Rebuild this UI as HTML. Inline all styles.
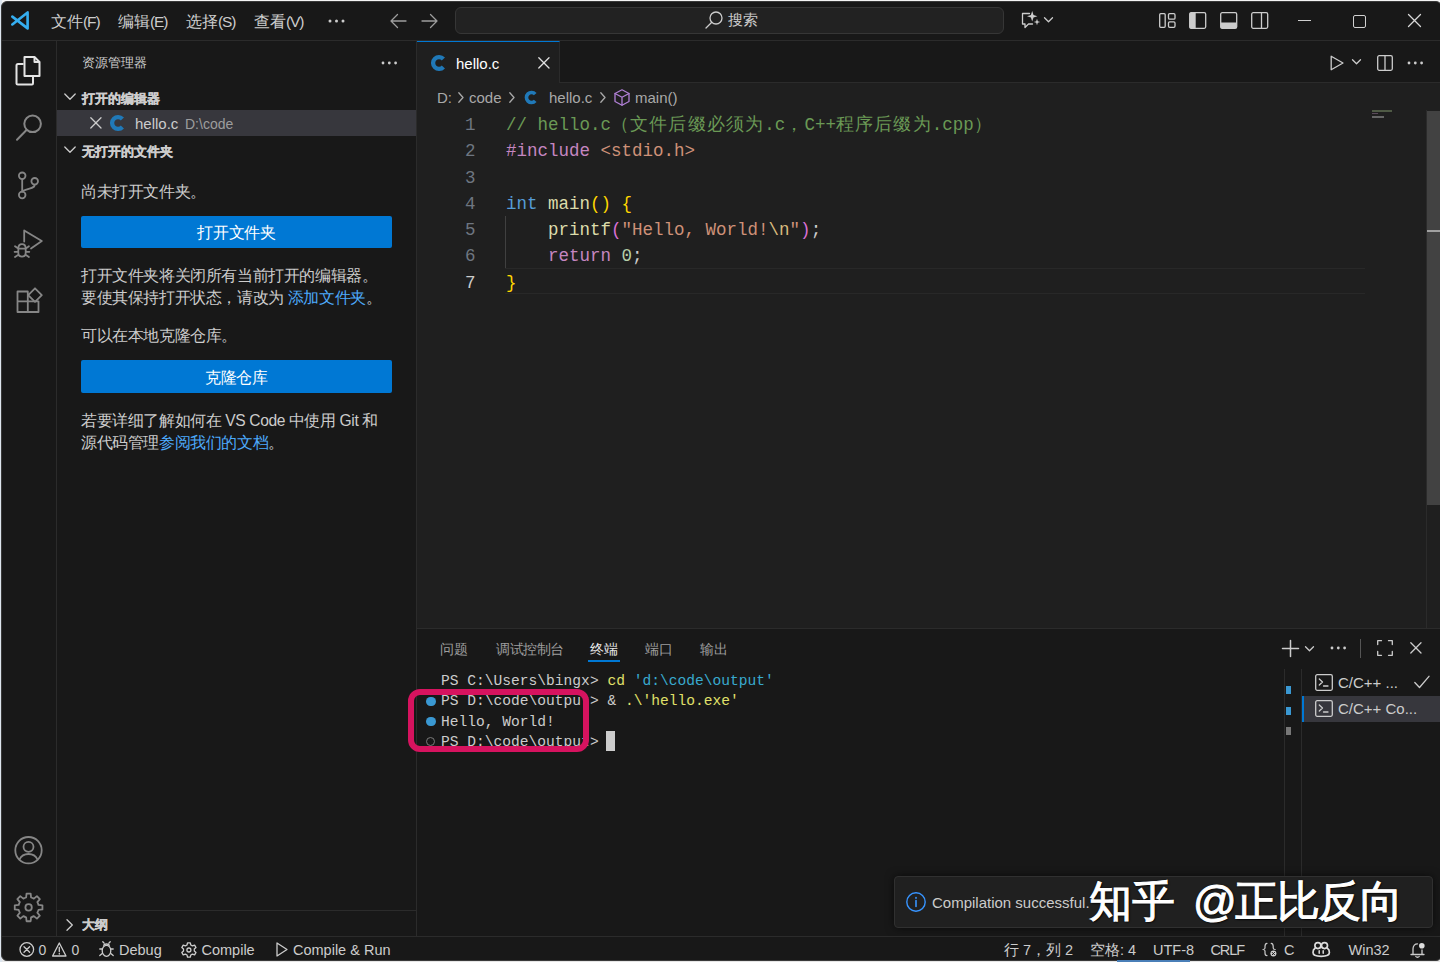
<!DOCTYPE html>
<html><head><meta charset="utf-8">
<style>
*{box-sizing:border-box;margin:0;padding:0}
html,body{width:1440px;height:962px;overflow:hidden;background:#e6e6e6}
body{font-family:"Liberation Sans",sans-serif;color:#cccccc;position:relative}
.a{position:absolute}
.t{position:absolute;white-space:pre;line-height:1}
svg{position:absolute;overflow:visible}
.mono{font-family:"Liberation Mono",monospace}
.cj{letter-spacing:1.15px}
.ic{fill:none;stroke:#868686;stroke-width:1.6;stroke-linecap:round;stroke-linejoin:round}
.ti{fill:none;stroke:#cccccc;stroke-width:1.3;stroke-linecap:round;stroke-linejoin:round}
</style></head><body>
<!-- window frame -->
<div class="a" style="left:0;top:0;width:1440px;height:2px;background:#f4f4f4"></div>
<div class="a" style="left:0;top:0;width:2px;height:962px;background:#dde5ee"></div>
<div class="a" style="left:1px;top:1px;width:1441px;height:960px;background:#181818;border-radius:6px;border:1px solid #3a3a3a"></div>

<!-- ================= TITLE BAR ================= -->
<div class="a" style="left:2px;top:40px;width:1438px;height:1px;background:#2b2b2b"></div>
<svg style="left:0;top:0" width="1" height="1"><g fill="none" stroke="#35aef0" stroke-width="2.6" stroke-linecap="round" stroke-linejoin="round"><path d="M12.3 16.6L27.6 28.4V12.4L12.3 24.4"/></g></svg>
<div class="t" style="left:51px;top:14px;font-size:15.5px;color:#cccccc">文件<span style="letter-spacing:-1.1px">(F</span>)</div>
<div class="t" style="left:118px;top:14px;font-size:15.5px;color:#cccccc">编辑<span style="letter-spacing:-1.1px">(E</span>)</div>
<div class="t" style="left:186px;top:14px;font-size:15.5px;color:#cccccc">选择<span style="letter-spacing:-1.1px">(S</span>)</div>
<div class="t" style="left:254px;top:14px;font-size:15.5px;color:#cccccc">查看<span style="letter-spacing:-1.1px">(V</span>)</div>
<svg style="left:328px;top:19px" width="18" height="4"><circle cx="2" cy="2" r="1.5" fill="#ccc"/><circle cx="8.5" cy="2" r="1.5" fill="#ccc"/><circle cx="15" cy="2" r="1.5" fill="#ccc"/></svg>
<!-- nav arrows -->
<svg style="left:390px;top:13px" width="17" height="16" class="ti"><path style="stroke:#9d9d9d" d="M1 8H16M1 8L7.5 1.5M1 8L7.5 14.5"/></svg>
<svg style="left:421px;top:13px" width="17" height="16" class="ti"><path style="stroke:#9d9d9d" d="M16 8H1M16 8L9.5 1.5M16 8L9.5 14.5"/></svg>
<!-- search box -->
<div class="a" style="left:455px;top:7px;width:549px;height:27px;background:#222222;border:1px solid #363636;border-radius:6px"></div>
<svg style="left:705px;top:11px" width="18" height="18" class="ti"><circle cx="11" cy="7" r="6"/><path d="M6.8 11.2L1 17"/></svg>
<div class="t" style="left:728px;top:13px;font-size:14.5px;color:#cccccc">搜索</div>
<!-- copilot -->
<svg style="left:1020px;top:11px" width="20" height="18" class="ti"><path d="M9.5 2.5H2.5V13H5V16.5L8.5 13H12.5"/><path fill="#ccc" stroke="none" d="M12.2 0L13.5 3.9 17.4 5.2 13.5 6.5 12.2 10.4 10.9 6.5 7 5.2 10.9 3.9Z"/><path fill="#ccc" stroke="none" d="M17 7.8L17.8 10.2 20.2 11 17.8 11.8 17 14.2 16.2 11.8 13.8 11 16.2 10.2Z"/></svg>
<svg style="left:1044px;top:17px" width="9" height="6" class="ti"><path d="M0.5 0.8L4.5 4.8 8.5 0.8"/></svg>
<!-- layout icons -->
<svg style="left:1159px;top:13px" width="17" height="15" class="ti"><rect x="0.7" y="0.7" width="5.5" height="13.6" rx="1"/><rect x="9.5" y="0.7" width="6.5" height="5.5" rx="1.2"/><rect x="9.5" y="8.8" width="6.5" height="5.5" rx="1.2"/></svg>
<svg style="left:1189px;top:12px" width="18" height="17" class="ti"><rect x="0.7" y="0.7" width="16" height="15.6" rx="1.5"/><rect x="0.7" y="0.7" width="6" height="15.6" fill="#ccc" stroke="none"/></svg>
<svg style="left:1220px;top:12px" width="18" height="17" class="ti"><rect x="0.7" y="0.7" width="16" height="15.6" rx="1.5"/><rect x="0.7" y="10.5" width="16" height="5.8" fill="#ccc" stroke="none"/></svg>
<svg style="left:1251px;top:12px" width="18" height="17" class="ti"><rect x="0.7" y="0.7" width="16" height="15.6" rx="1.5"/><path d="M10.5 0.7V16.3"/></svg>
<!-- window controls -->
<div class="a" style="left:1298px;top:20px;width:13px;height:1.3px;background:#d0d0d0"></div>
<div class="a" style="left:1353px;top:15px;width:12.5px;height:12.5px;border:1.3px solid #d0d0d0;border-radius:2px"></div>
<svg style="left:1408px;top:14px" width="13" height="13" class="ti"><path style="stroke:#d8d8d8" d="M0.5 0.5L12.5 12.5M12.5 0.5L0.5 12.5"/></svg>

<!-- ================= ACTIVITY BAR ================= -->
<div class="a" style="left:56px;top:41px;width:1px;height:895px;background:#2b2b2b"></div>

<svg style="left:15px;top:56px" width="27" height="30"><g fill="none" stroke="#e4e4e4" stroke-width="2" stroke-linejoin="round"><path d="M24.5 1H34.5L39.5 6V20H24.5Z" transform="translate(-15 0)"/><path d="M34.5 1V6H39.5" transform="translate(-15 0)"/><path d="M23.5 8H18C17 8 16.5 8.5 16.5 9.5V27.5C16.5 28.3 17 28.5 17.8 28.5H32C32.8 28.5 33 28 33 27.3V21" transform="translate(-15 0)"/></g></svg>
<svg style="left:15px;top:113px" width="28" height="30" class="ic"><circle cx="17.6" cy="10.8" r="8.3" stroke-width="2"/><path d="M11.5 17L2 26.8" stroke-width="2"/></svg>
<svg style="left:15px;top:170px" width="28" height="32" class="ic"><g stroke-width="1.8"><circle cx="7.2" cy="5.8" r="3.3"/><circle cx="19.7" cy="11.3" r="3.3"/><circle cx="7.2" cy="25" r="3.3"/><path d="M7.2 9.1V21.7"/><path d="M19.7 14.6C19.7 19 14 17.5 7.5 21"/></g></svg>
<svg style="left:0px;top:0px" width="1" height="1" class="ic"><g stroke-width="1.8"><path d="M24.2 241.5V230.5L41.8 241.1 31 248.6"/><path d="M18.3 248.6C18.3 242.6 25.7 242.6 25.7 248.6ZM18.3 248.6V252.5C18.3 258 25.7 258 25.7 252.5V248.6M15 246.3L18.2 248.6M28.9 246.3L25.8 248.6M14.6 251.8H18.2M29.3 251.8H25.8M15 257L18.4 254.8M28.9 257L25.6 254.8"/></g></svg>
<svg style="left:15px;top:287px" width="30" height="30" class="ic"><g stroke-width="1.8"><path d="M2.5 4.5H12.8V14.3H2.5ZM2.5 14.3H12.8V25H2.5ZM12.8 14.3H23.5V25H12.8Z"/><path d="M20 1.3L26.8 8.1 20 14.9 13.2 8.1Z"/></g></svg>
<svg style="left:14px;top:836px" width="30" height="30" class="ic"><g stroke-width="1.8"><circle cx="14.5" cy="14.2" r="13.2"/><circle cx="14.5" cy="10.8" r="5"/><path d="M5.5 23.5C7.5 19 11 18 14.5 18S21.5 19 23.5 23.5"/></g></svg>
<svg style="left:0;top:0" width="1" height="1" class="ic"><g stroke-width="1.8"><path d="M26.13 897.50L26.53 893.55L30.67 893.55L31.07 897.50A10.2 10.2 0 0 1 33.85 898.66L36.93 896.15L39.85 899.07L37.34 902.15A10.2 10.2 0 0 1 38.50 904.93L42.45 905.33L42.45 909.47L38.50 909.87A10.2 10.2 0 0 1 37.34 912.65L39.85 915.73L36.93 918.65L33.85 916.14A10.2 10.2 0 0 1 31.07 917.30L30.67 921.25L26.53 921.25L26.13 917.30A10.2 10.2 0 0 1 23.35 916.14L20.27 918.65L17.35 915.73L19.86 912.65A10.2 10.2 0 0 1 18.70 909.87L14.75 909.47L14.75 905.33L18.70 904.93A10.2 10.2 0 0 1 19.86 902.15L17.35 899.07L20.27 896.15L23.35 898.66A10.2 10.2 0 0 1 26.13 897.50Z"/><circle cx="28.6" cy="907.4" r="3.2"/></g></svg>
<!-- ================= SIDEBAR ================= -->
<div class="a" style="left:416px;top:41px;width:1px;height:895px;background:#2b2b2b"></div>
<div class="t" style="left:82px;top:56px;font-size:13px;color:#cccccc">资源管理器</div>
<svg style="left:381px;top:61px" width="17" height="4"><circle cx="2" cy="2" r="1.4" fill="#ccc"/><circle cx="8.3" cy="2" r="1.4" fill="#ccc"/><circle cx="14.6" cy="2" r="1.4" fill="#ccc"/></svg>
<!-- open editors -->
<svg style="left:64px;top:93px" width="12" height="8" class="ti"><path d="M0.8 1L6 6.3 11.2 1"/></svg>
<div class="t" style="left:82px;top:92px;font-size:13px;font-weight:bold;-webkit-text-stroke:0.3px #ccc;color:#cccccc">打开的编辑器</div>
<div class="a" style="left:57px;top:110px;width:359px;height:26px;background:#37373d"></div>
<svg style="left:90px;top:117px" width="12" height="12" class="ti"><path d="M0.8 0.8L11 11M11 0.8L0.8 11"/></svg>
<svg style="left:107.8px;top:112.9px" width="20.0" height="20.0"><path d="M14.38 6.05A5.90 5.90 0 1 0 14.38 13.95" fill="none" stroke="#2079b8" stroke-width="4.30"/></svg>
<div class="t" style="left:135px;top:116px;font-size:15px;color:#cccccc">hello.c</div>
<div class="t" style="left:185px;top:117px;font-size:14px;color:#9d9d9d">D:\code</div>
<!-- no folder -->
<svg style="left:64px;top:146px" width="12" height="8" class="ti"><path d="M0.8 1L6 6.3 11.2 1"/></svg>
<div class="t" style="left:82px;top:145px;font-size:13px;font-weight:bold;-webkit-text-stroke:0.3px #ccc;color:#cccccc">无打开的文件夹</div>
<div class="t" style="left:81px;top:184px;font-size:15.6px;letter-spacing:-0.4px;color:#cccccc">尚未打开文件夹。</div>
<div class="a" style="left:81px;top:216px;width:311px;height:32px;background:#0078d4;border-radius:2px"></div>
<div class="t" style="left:81px;top:225px;width:311px;text-align:center;font-size:15.6px;letter-spacing:-0.4px;color:#ffffff">打开文件夹</div>
<div class="t" style="left:81px;top:268px;font-size:15.6px;letter-spacing:-0.4px;color:#cccccc">打开文件夹将关闭所有当前打开的编辑器。</div>
<div class="t" style="left:81px;top:290px;font-size:15.6px;letter-spacing:-0.4px;color:#cccccc">要使其保持打开状态，请改为 <span style="color:#4daafc">添加文件夹</span>。</div>
<div class="t" style="left:81px;top:328px;font-size:15.6px;letter-spacing:-0.4px;color:#cccccc">可以在本地克隆仓库。</div>
<div class="a" style="left:81px;top:360px;width:311px;height:33px;background:#0078d4;border-radius:2px"></div>
<div class="t" style="left:81px;top:370px;width:311px;text-align:center;font-size:15.6px;letter-spacing:-0.4px;color:#ffffff">克隆仓库</div>
<div class="t" style="left:81px;top:413px;font-size:15.6px;letter-spacing:-0.4px;color:#cccccc">若要详细了解如何在 VS Code 中使用 Git 和</div>
<div class="t" style="left:81px;top:435px;font-size:15.6px;letter-spacing:-0.4px;color:#cccccc">源代码管理<span style="color:#4daafc">参阅我们的文档</span>。</div>
<!-- outline -->
<div class="a" style="left:57px;top:910px;width:359px;height:1px;background:#2b2b2b"></div>
<svg style="left:66px;top:919px" width="8" height="12" class="ti"><path d="M1 0.8L6.3 6 1 11.2"/></svg>
<div class="t" style="left:82px;top:918px;font-size:13px;font-weight:bold;-webkit-text-stroke:0.3px #ccc;color:#cccccc">大纲</div>
<!-- ================= EDITOR ================= -->
<div class="a" style="left:417px;top:41px;width:1023px;height:587px;background:#1f1f1f"></div>
<div class="a" style="left:417px;top:41px;width:1023px;height:42px;background:#181818;border-bottom:1px solid #2b2b2b"></div>
<div class="a" style="left:417px;top:41px;width:143px;height:42px;background:#1f1f1f;border-top:1.5px solid #0078d4;border-right:1px solid #2b2b2b"></div>
<svg style="left:428.8px;top:53.3px" width="20.0" height="20.0"><path d="M14.38 6.05A5.90 5.90 0 1 0 14.38 13.95" fill="none" stroke="#2079b8" stroke-width="4.30"/></svg>
<div class="t" style="left:456px;top:56px;font-size:15px;color:#ffffff">hello.c</div>
<svg style="left:538px;top:57px" width="12" height="12" class="ti"><path style="stroke:#e0e0e0" d="M0.8 0.8L11 11M11 0.8L0.8 11"/></svg>
<!-- editor actions -->
<svg style="left:1330px;top:55px" width="14" height="16" class="ti"><path d="M1.2 1.2L13 8 1.2 14.8Z"/></svg>
<svg style="left:1352px;top:59px" width="9" height="6" class="ti"><path d="M0.5 0.8L4.5 4.8 8.5 0.8"/></svg>
<svg style="left:1377px;top:55px" width="16" height="16" class="ti"><rect x="0.7" y="0.7" width="14.6" height="14.6" rx="1.5"/><path d="M8 0.7V15.3"/></svg>
<svg style="left:1407px;top:61px" width="17" height="4"><circle cx="2" cy="2" r="1.4" fill="#ccc"/><circle cx="8.3" cy="2" r="1.4" fill="#ccc"/><circle cx="14.6" cy="2" r="1.4" fill="#ccc"/></svg>
<!-- breadcrumbs -->
<div class="t" style="left:437px;top:90px;font-size:15px;color:#a9a9a9">D:</div>
<svg style="left:458px;top:92px" width="6" height="11" class="ti"><path style="stroke:#a9a9a9" d="M0.8 0.8L5 5.5 0.8 10.2"/></svg>
<div class="t" style="left:469px;top:90px;font-size:15px;color:#a9a9a9">code</div>
<svg style="left:509px;top:92px" width="6" height="11" class="ti"><path style="stroke:#a9a9a9" d="M0.8 0.8L5 5.5 0.8 10.2"/></svg>
<svg style="left:523.4px;top:89.4px" width="17.0" height="17.0"><path d="M12.23 5.14A5.02 5.02 0 1 0 12.23 11.86" fill="none" stroke="#2079b8" stroke-width="3.65"/></svg>
<div class="t" style="left:549px;top:90px;font-size:15px;color:#a9a9a9">hello.c</div>
<svg style="left:600px;top:92px" width="6" height="11" class="ti"><path style="stroke:#a9a9a9" d="M0.8 0.8L5 5.5 0.8 10.2"/></svg>
<svg style="left:614px;top:89px" width="16" height="17" class="ti"><g style="stroke:#b180d7" stroke-width="1.3"><path d="M8 0.8L15 4.5V12.5L8 16.2 1 12.5V4.5Z"/><path d="M1 4.5L8 8.3 15 4.5M8 8.3V16.2"/></g></svg>
<div class="t" style="left:635px;top:90px;font-size:15px;color:#a9a9a9">main()</div>

<!-- line numbers -->
<div class="mono" style="position:absolute;left:439.5px;top:112px;width:36px;text-align:right;font-size:17.5px;line-height:26.3px;color:#6e7681;white-space:pre">1
2
3
4
5
6
<span style="color:#cccccc">7</span></div>
<!-- current line -->
<div class="a" style="left:505px;top:268px;width:860px;height:26px;border-top:1px solid #282828;border-bottom:1px solid #282828"></div>
<!-- indent guide -->
<div class="a" style="left:505px;top:216px;width:1px;height:52px;background:#404040"></div>
<!-- code -->
<div class="mono" style="position:absolute;left:506px;top:112px;font-size:17.5px;line-height:26.3px;color:#cccccc;white-space:pre"><span style="color:#6a9955">// hello.c<span class="cj">（文件后缀必须为</span>.c<span class="cj">，</span>C++<span class="cj">程序后缀为</span>.cpp<span class="cj">）</span></span>
<span style="color:#c586c0">#include</span> <span style="color:#ce9178">&lt;stdio.h&gt;</span>

<span style="color:#569cd6">int</span> <span style="color:#dcdcaa">main</span><span style="color:#ffd700">()</span> <span style="color:#ffd700">{</span>
    <span style="color:#dcdcaa">printf</span><span style="color:#da70d6">(</span><span style="color:#ce9178">"Hello, World!</span><span style="color:#d7ba7d">\n</span><span style="color:#ce9178">"</span><span style="color:#da70d6">)</span>;
    <span style="color:#c586c0">return</span> <span style="color:#b5cea8">0</span>;
<span style="color:#ffd700">}</span></div>
<!-- minimap -->
<div class="a" style="left:1372px;top:110px;width:20px;height:1.5px;background:#4f5a45"></div>
<div class="a" style="left:1372px;top:112.5px;width:6px;height:1.5px;background:#5a4a5a"></div>
<div class="a" style="left:1372px;top:116px;width:12px;height:1.5px;background:#666"></div>
<!-- scrollbar -->
<div class="a" style="left:1426px;top:110px;width:1px;height:518px;background:#2b2b2b"></div>
<div class="a" style="left:1427px;top:110.5px;width:13px;height:394px;background:#424242"></div>
<div class="a" style="left:1427px;top:230px;width:13px;height:2px;background:#a0a0a0"></div>
<!-- ================= PANEL ================= -->
<div class="a" style="left:417px;top:628px;width:1023px;height:1px;background:#2b2b2b"></div>
<div class="t" style="left:440px;top:643px;font-size:13.5px;letter-spacing:-0.5px;color:#9d9d9d">问题</div>
<div class="t" style="left:496px;top:643px;font-size:13.5px;letter-spacing:-0.5px;color:#9d9d9d">调试控制台</div>
<div class="t" style="left:590px;top:643px;font-size:13.5px;letter-spacing:-0.5px;color:#e7e7e7">终端</div>
<div class="a" style="left:588px;top:660px;width:32px;height:1.5px;background:#0078d4"></div>
<div class="t" style="left:645px;top:643px;font-size:13.5px;letter-spacing:-0.5px;color:#9d9d9d">端口</div>
<div class="t" style="left:700px;top:643px;font-size:13.5px;letter-spacing:-0.5px;color:#9d9d9d">输出</div>
<!-- panel actions -->
<svg style="left:1282px;top:640px" width="17" height="17" class="ti"><path stroke-width="1.5" d="M8.5 0.5V16.5M0.5 8.5H16.5"/></svg>
<svg style="left:1305px;top:646px" width="9" height="6" class="ti"><path d="M0.5 0.8L4.5 4.8 8.5 0.8"/></svg>
<svg style="left:1330px;top:646px" width="17" height="4"><circle cx="2" cy="2" r="1.4" fill="#ccc"/><circle cx="8.3" cy="2" r="1.4" fill="#ccc"/><circle cx="14.6" cy="2" r="1.4" fill="#ccc"/></svg>
<div class="a" style="left:1360px;top:639px;width:1px;height:19px;background:#555"></div>
<svg style="left:1377px;top:640px" width="16" height="16" class="ti"><path d="M0.7 4.5V0.7H4.5M11.5 0.7H15.3V4.5M15.3 11.5V15.3H11.5M4.5 15.3H0.7V11.5"/></svg>
<svg style="left:1410px;top:642px" width="12" height="12" class="ti"><path d="M0.8 0.8L11 11M11 0.8L0.8 11"/></svg>
<!-- terminal -->
<div class="mono" style="position:absolute;left:441px;top:670.8px;font-size:14.6px;line-height:20.4px;color:#cccccc;white-space:pre">PS C:\Users\bingx&gt; <span style="color:#e0e06a">cd</span> <span style="color:#38aacf">'d:\code\output'</span>
PS D:\code\output&gt; &amp; <span style="color:#e0e06a">.\'hello.exe'</span>
Hello, World!
PS D:\code\output&gt; </div>
<div class="a" style="left:606px;top:731px;width:9px;height:20px;background:#cccccc"></div>
<div class="a" style="left:426px;top:696.5px;width:9.5px;height:9.5px;border-radius:50%;background:#3a98d2"></div>
<div class="a" style="left:426px;top:716.5px;width:9.5px;height:9.5px;border-radius:50%;background:#3a98d2"></div>
<div class="a" style="left:426px;top:737px;width:9px;height:9px;border-radius:50%;border:1.5px solid #7a7a7a"></div>
<!-- annotation box -->
<div class="a" style="left:408px;top:688.5px;width:181px;height:63px;border:6.5px solid #d6135f;border-radius:12px"></div>
<!-- terminal right overview -->
<div class="a" style="left:1284px;top:669px;width:1px;height:268px;background:#2b2b2b"></div>
<div class="a" style="left:1301px;top:669px;width:1px;height:268px;background:#2b2b2b"></div>
<div class="a" style="left:1285.5px;top:686px;width:5.5px;height:8px;background:#3a98d2"></div>
<div class="a" style="left:1285.5px;top:706.5px;width:5.5px;height:8px;background:#3a98d2"></div>
<div class="a" style="left:1285.5px;top:727px;width:5.5px;height:8px;background:#777"></div>
<!-- terminal tabs -->
<svg style="left:1315px;top:674px" width="18" height="17" class="ti"><rect x="0.7" y="0.7" width="16.6" height="15.6" rx="1.5"/><path d="M4.3 5L7.5 8 4.3 11M8.5 12H13"/></svg>
<div class="t" style="left:1338px;top:675px;font-size:15px;color:#cccccc">C/C++ ...</div>
<svg style="left:1414px;top:675px" width="16" height="14" class="ti"><path d="M0.8 7.5L5.5 12.5 15 1.3"/></svg>
<div class="a" style="left:1302px;top:695.5px;width:138px;height:26.5px;background:#37373d"></div>
<div class="a" style="left:1302px;top:695.5px;width:2px;height:26.5px;background:#0078d4"></div>
<svg style="left:1315px;top:700px" width="18" height="17" class="ti"><rect x="0.7" y="0.7" width="16.6" height="15.6" rx="1.5"/><path d="M4.3 5L7.5 8 4.3 11M8.5 12H13"/></svg>
<div class="t" style="left:1338px;top:701px;font-size:15px;color:#cccccc">C/C++ Co...</div>

<!-- ================= STATUS BAR ================= -->
<div class="a" style="left:2px;top:936px;width:1438px;height:1px;background:#2b2b2b"></div>
<svg style="left:18.5px;top:942px" width="16" height="16" class="ti"><circle cx="7.8" cy="7.5" r="6.8"/><path d="M5 4.7L10.6 10.3M10.6 4.7L5 10.3"/></svg>
<div class="t" style="left:38.5px;top:943px;font-size:14px;color:#cccccc">0</div>
<svg style="left:51.5px;top:941.5px" width="16" height="16" class="ti"><path d="M7.3 1L14 14H0.6Z"/><path d="M7.3 5.5V9.5M7.3 11.3V12"/></svg>
<div class="t" style="left:71.5px;top:943px;font-size:14px;color:#cccccc">0</div>
<svg style="left:99px;top:941px" width="16" height="17" class="ti"><ellipse cx="7.5" cy="9.8" rx="4.3" ry="5.5"/><path d="M4.8 4.5C5 2.5 10 2.5 10.2 4.5M3.2 8H0.8M11.8 8H14.2M3.2 12.5L0.8 14.5M11.8 12.5L14.2 14.5M5 2L3.8 0.8M10 2L11.2 0.8"/></svg>
<div class="t" style="left:119px;top:943px;font-size:14.5px;color:#cccccc">Debug</div>
<svg style="left:181px;top:941.5px" width="16" height="16" class="ti"><path d="M6.5 0.8H9.3L9.8 3 11.4 3.9 13.6 3.2 15 5.6 13.3 7.1V8.9L15 10.4 13.6 12.8 11.4 12.1 9.8 13 9.3 15.2H6.5L6 13 4.4 12.1 2.2 12.8 0.8 10.4 2.5 8.9V7.1L0.8 5.6 2.2 3.2 4.4 3.9 6 3Z"/><circle cx="7.9" cy="8" r="2"/></svg>
<div class="t" style="left:201.5px;top:943px;font-size:14.5px;color:#cccccc">Compile</div>
<svg style="left:276px;top:942px" width="12" height="15" class="ti"><path d="M1 1L11 7.5 1 14Z"/></svg>
<div class="t" style="left:293px;top:943px;font-size:14.5px;color:#cccccc">Compile &amp; Run</div>
<!-- right -->
<div class="t" style="left:1004px;top:943px;font-size:14.5px;color:#cccccc">行 7，列 2</div>
<div class="t" style="left:1090px;top:943px;font-size:14.5px;color:#cccccc">空格: 4</div>
<div class="t" style="left:1153px;top:943px;font-size:14.5px;color:#cccccc">UTF-8</div>
<div class="t" style="left:1210.5px;top:943px;font-size:14.5px;letter-spacing:-1.1px;color:#cccccc">CRLF</div>
<svg style="left:0;top:0" width="1" height="1" class="ti"><path stroke-width="1.2" d="M1267 943.3C1265 943.3 1265 944.5 1265 946.5V948C1265 949 1264.5 949.5 1263 949.5 1264.5 949.5 1265 950 1265 951V953C1265 954.8 1265.5 955.6 1267 955.6M1271.2 943.3C1273.2 943.3 1273.2 944.5 1273.2 946.5V948C1273.2 949 1273.7 949.5 1275.2 949.5"/><circle cx="1273.4" cy="953.6" r="3" fill="#d0d0d0" stroke="none"/><path stroke="#181818" stroke-width="1" d="M1272.2 952.4L1274.6 954.8M1274.6 952.4L1272.2 954.8"/></svg>
<div class="t" style="left:1284px;top:943px;font-size:14.5px;color:#cccccc">C</div>
<svg style="left:0;top:0" width="1" height="1" class="ti"><g stroke-width="1.7" stroke="#dcdcdc"><circle cx="1317.9" cy="945.6" r="3"/><circle cx="1324.5" cy="945.6" r="3"/><path d="M1314.8 948.5C1313.2 949.5 1313 951 1313 952.5 1313 955 1316.5 956.3 1321.2 956.3S1329.4 955 1329.4 952.5C1329.4 951 1329.2 949.5 1327.6 948.5"/></g><path stroke="#dcdcdc" stroke-width="1.5" d="M1319.2 950.8V953.2M1323.2 950.8V953.2"/></svg>
<div class="t" style="left:1348.5px;top:943px;font-size:14.5px;color:#cccccc">Win32</div>
<svg style="left:1410px;top:941.5px" width="16" height="16" class="ti"><path d="M3 12.5V7C3 3.5 5 1.8 7.5 1.8M12 12.5V8M1 12.5H14M5.8 14.5C6.5 15.5 8.5 15.5 9.2 14.5"/><circle cx="11.8" cy="3.8" r="2.8" fill="#ddd" stroke="none"/></svg>

<div class="a" style="left:1117px;top:960px;width:73px;height:2px;background:#4a7fb8"></div>
<!-- ================= TOAST ================= -->
<div class="a" style="left:894px;top:876px;width:539px;height:52px;background:#202020;border:1px solid #303030;border-radius:4px;box-shadow:0 0 8px rgba(0,0,0,.6)"></div>
<svg style="left:906px;top:892px" width="20" height="20" class="ti"><circle cx="10" cy="10" r="9.2" style="stroke:#3794ff" stroke-width="1.4"/><path style="stroke:#3794ff" stroke-width="1.6" d="M10 8.5V14.5M10 5.5V6.2"/></svg>
<div class="t" style="left:932px;top:895px;font-size:15px;color:#cccccc">Compilation successful.</div>
<div class="t" style="left:1089px;top:880px;font-size:43px;color:#ffffff;-webkit-text-stroke:1px #fff;text-shadow:0 0 2px #000,1px 1px 2px #000">知乎<span style="letter-spacing:6px"> </span><span style="letter-spacing:-1.4px">@正比反向</span></div>
</body></html>
